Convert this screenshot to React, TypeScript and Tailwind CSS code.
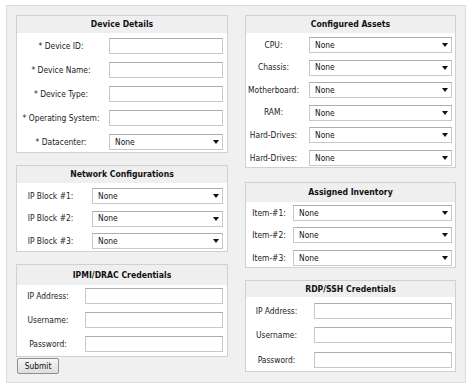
import React from "react";

type Row = { label: string; kind: "input" | "select" };

type FieldCardProps = {
  title: string;
  rows: Row[];
  labelClass: string;
  headerClass: string;
  bodyClass: string;
};

function Select() {
  return (
    <div className="relative flex-1 h-4">
      <select className="appearance-none w-full h-4 border border-[#c8c8c8] border-t-[#adadad] bg-white pl-[5px] text-[8.4px] text-[#111] outline-none leading-none">
        <option>None</option>
      </select>
      <svg
        className="absolute right-[4px] top-[6px] pointer-events-none"
        width="6"
        height="4"
        viewBox="0 0 6 4"
      >
        <path d="M0 0 H6 L3 4 Z" fill="#111" />
      </svg>
    </div>
  );
}

function FieldCard({ title, rows, labelClass, headerClass, bodyClass }: FieldCardProps) {
  return (
    <section className="border border-[#d0d0d0] bg-white">
      <h3
        className={`${headerClass} bg-[#efefef] flex items-center justify-center font-bold text-[8.6px] text-[#111]`}
      >
        {title}
      </h3>
      <div className={`${bodyClass} flex flex-col`}>
        {rows.map((row, i) => (
          <div key={i} className="flex items-center">
            <label className={`${labelClass} text-center text-[#1a1a1a] whitespace-nowrap`}>
              {row.label}
            </label>
            {row.kind === "input" ? (
              <input
                type="text"
                className="flex-1 min-w-0 h-4 border border-[#c8c8c8] border-t-[#adadad] bg-white outline-none"
              />
            ) : (
              <Select />
            )}
          </div>
        ))}
      </div>
    </section>
  );
}

const inputRows = (labels: string[]): Row[] => labels.map((label) => ({ label, kind: "input" }));
const selectRows = (labels: string[]): Row[] => labels.map((label) => ({ label, kind: "select" }));

export default function App() {
  return (
    <div className="w-[474px] h-[391px] bg-white pt-[5px] pl-[6px] font-['DejaVu_Sans_Condensed','DejaVu_Sans',sans-serif] text-[8.4px]">
      <form className="w-[460px] border border-[#dcdcdc] bg-[#f0f0f0] pt-[9px] px-[9px] pb-[8px] flex gap-[17px] items-start">
        <div className="w-[212px] flex flex-col">
          <FieldCard
            title="Device Details"
            rows={[
              ...inputRows(["* Device ID:", "* Device Name:", "* Device Type:", "* Operating System:"]),
              { label: "* Datacenter:", kind: "select" },
            ]}
            headerClass="h-[17px]"
            bodyClass="pt-[5px] pb-[2px] pr-[4px] gap-[8px]"
            labelClass="w-[88px] mr-[4px]"
          />
          <div className="mt-[12px]">
            <FieldCard
              title="Network Configurations"
              rows={selectRows(["IP Block #1:", "IP Block #2:", "IP Block #3:"])}
              headerClass="h-[17px]"
              bodyClass="pt-[5px] pb-[2px] pr-[4px] gap-[6.5px]"
              labelClass="w-[67px] mr-[8px]"
            />
          </div>
          <div className="mt-[12px]">
            <FieldCard
              title="IPMI/DRAC Credentials"
              rows={inputRows(["IP Address:", "Username:", "Password:"])}
              headerClass="h-[20px]"
              bodyClass="pt-[3px] pb-[4px] pr-[4px] gap-[8px]"
              labelClass="w-[62px] mr-[6px]"
            />
          </div>
          <div className="mt-[1px]">
            <button
              type="button"
              className="ml-[1px] w-[42px] h-4 border border-[#8f8f8f] rounded-[2px] bg-gradient-to-b from-[#f6f6f6] to-[#dedede] text-[8.4px] text-[#111] leading-none"
            >
              Submit
            </button>
          </div>
        </div>
        <div className="w-[211px] flex flex-col">
          <FieldCard
            title="Configured Assets"
            rows={selectRows(["CPU:", "Chassis:", "Motherboard:", "RAM:", "Hard-Drives:", "Hard-Drives:"])}
            headerClass="h-[17px]"
            bodyClass="pt-[4px] pb-[1px] pr-[3px] gap-[6.6px]"
            labelClass="w-[55px] mr-[8px]"
          />
          <div className="mt-[14px]">
            <FieldCard
              title="Assigned Inventory"
              rows={selectRows(["Item-#1:", "Item-#2:", "Item-#3:"])}
              headerClass="h-[19px]"
              bodyClass="pt-[3px] pb-[1px] pr-[3px] gap-[6.5px]"
              labelClass="w-[46px] mr-[1px]"
            />
          </div>
          <div className="mt-[12px]">
            <FieldCard
              title="RDP/SSH Credentials"
              rows={inputRows(["IP Address:", "Username:", "Password:"])}
              headerClass="h-[16px]"
              bodyClass="pt-[6px] pb-[3px] pr-[3px] gap-[8.5px]"
              labelClass="w-[61px] mr-[7px]"
            />
          </div>
        </div>
      </form>
    </div>
  );
}
